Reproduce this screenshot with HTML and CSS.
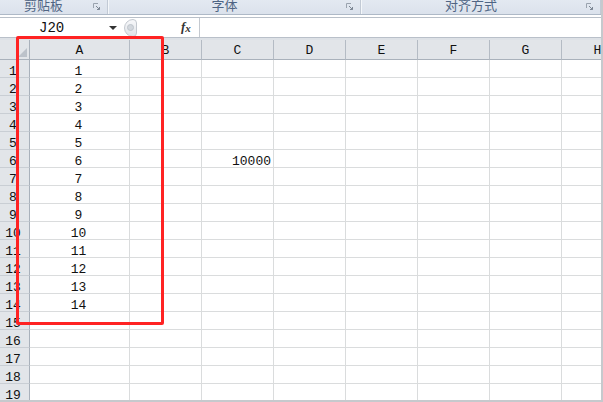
FILE: index.html
```html
<!DOCTYPE html>
<html lang="zh">
<head>
    <meta charset="UTF-8">
    <title>Excel</title>
    <link rel="stylesheet" href="styles.css">
</head>
<body>
    <div class="window">
        <div class="ribbon">
            <div class="group group-clip">
                <span class="group-label">剪贴板</span>
                <span class="launcher"><svg width="7" height="7" viewBox="0 0 7 7"><path d="M0.5 5V0.5H5" fill="none" stroke="#9aa3ae"/><path d="M3 3L6.5 6.5M4 6.5H6.5V4" fill="none" stroke="#7d8794"/></svg></span>
            </div>
            <div class="group group-font">
                <span class="group-label">字体</span>
                <span class="launcher"><svg width="7" height="7" viewBox="0 0 7 7"><path d="M0.5 5V0.5H5" fill="none" stroke="#9aa3ae"/><path d="M3 3L6.5 6.5M4 6.5H6.5V4" fill="none" stroke="#7d8794"/></svg></span>
            </div>
            <div class="group group-align">
                <span class="group-label">对齐方式</span>
                <span class="launcher"><svg width="7" height="7" viewBox="0 0 7 7"><path d="M0.5 5V0.5H5" fill="none" stroke="#9aa3ae"/><path d="M3 3L6.5 6.5M4 6.5H6.5V4" fill="none" stroke="#7d8794"/></svg></span>
            </div>
        </div>

        <div class="formula-bar">
            <div class="name-box">
                <span>J20</span>
                <span class="arrow"></span>
            </div>
            <div class="grip"><span></span></div>
            <div class="fx">f<sub>x</sub></div>
            <div class="formula-input"></div>
        </div>

        <div class="sheet" id="sheet"></div>

        <div class="highlight"></div>
    </div>

    <script>
        const columns = ['A', 'B', 'C', 'D', 'E', 'F', 'G', 'H'];
        const values = {
            'C6': '10000'
        };
        for (let i = 1; i <= 14; i++) values['A' + i] = String(i);

        let html = '<div class="corner"><span></span></div>';
        html += columns.map(c => `<div class="col-head">${c}</div>`).join('');

        for (let r = 1; r <= 19; r++) {
            html += `<div class="row-head">${r}</div>`;
            html += columns.map(c => {
                const v = values[c + r] || '';
                const cls = c === 'A' ? 'cell center' : 'cell';
                return `<div class="${cls}">${v}</div>`;
            }).join('');
        }

        document.getElementById('sheet').innerHTML = html;
    </script>
</body>
</html>
```

FILE: styles.css
```css
* {
    margin: 0;
    padding: 0;
    box-sizing: border-box;
}

body {
    background: #fff;
    font-family: 'Liberation Mono', monospace;
    overflow: hidden;
}

.window {
    position: relative;
    width: 603px;
    height: 402px;
    border-right: 2px solid #c6c9cd;
    border-bottom: 2px solid #c6c9cd;
    overflow: hidden;
}

/* ribbon group names */
.ribbon {
    display: flex;
    height: 15px;
    background: linear-gradient(#e3e9f1, #dbe2ec);
    border-bottom: 1px solid #aeb9c7;
    overflow: hidden;
}

.group {
    display: flex;
    border-right: 1px solid #c2cad5;
}

.group + .group {
    border-left: 1px solid #f4f7fa;
}

.group-clip { width: 108px; }
.group-font { width: 253px; }
.group-align { flex: 1; }

.group-label {
    flex: 1;
    text-align: center;
    font-family: 'Noto Sans CJK SC', sans-serif;
    font-size: 13px;
    line-height: 13px;
    margin-top: -2px;
    color: #4f6584;
}

.launcher {
    width: 20px;
    padding: 3px 0 0 6px;
}

.launcher svg {
    display: block;
}

/* formula bar */
.formula-bar {
    display: flex;
    align-items: center;
    height: 21px;
    margin-top: 2px;
    background: #fff;
    border-top: 1px solid #b9c0c9;
    border-bottom: 1px solid #b9c0c9;
}

.name-box {
    display: flex;
    align-items: center;
    width: 122px;
    height: 100%;
    padding-left: 39px;
    font-size: 14px;
    color: #111;
}

.arrow {
    margin-left: auto;
    margin-right: 5px;
    border-left: 4px solid transparent;
    border-right: 4px solid transparent;
    border-top: 4px solid #333;
}

.grip {
    display: flex;
    align-items: center;
    justify-content: center;
    width: 13px;
    height: 18px;
    margin-left: 2px;
    border: 1px solid #c3c8cf;
    border-radius: 9px 4px 4px 9px;
    background: linear-gradient(#f7f8fa, #dfe3e8);
}

.grip span {
    width: 7px;
    height: 7px;
    border-radius: 50%;
    background: #d2d7dd;
    border: 1px solid #bfc5cc;
}

.fx {
    width: 19px;
    height: 100%;
    margin-left: 44px;
    padding-top: 1px;
    border-right: 1px solid #c4c9d0;
    font-family: 'Liberation Serif', serif;
    font-style: italic;
    font-weight: bold;
    font-size: 13px;
    color: #333;
}

.fx sub {
    font-size: 11px;
    vertical-align: -1px;
}

.formula-input {
    flex: 1;
    height: 100%;
}

/* worksheet */
.sheet {
    display: grid;
    grid-template-columns: 30px 100px repeat(7, 72px);
    grid-template-rows: 20px;
    grid-auto-rows: 18px;
    border-top: 2px solid #dde1e6;
    width: 634px;
    font-size: 13px;
    color: #111;
}

.corner, .col-head, .row-head {
    background: #e2e5e9;
    line-height: 18px;
    padding-top: 2px;
    overflow: hidden;
}

.row-head {
    padding-top: 3px;
}

.corner {
    position: relative;
    border-right: 1px solid #a9b1bb;
    border-bottom: 1px solid #a9b1bb;
}

.corner span {
    position: absolute;
    right: 2px;
    bottom: 2px;
    border-left: 9px solid transparent;
    border-bottom: 9px solid #bcc2ca;
}

.col-head {
    text-align: center;
    border-right: 1px solid #b4bbc4;
    border-bottom: 1px solid #a9b1bb;
}

.row-head {
    text-align: center;
    padding-right: 3px;
    border-right: 1px solid #a9b1bb;
    border-bottom: 1px solid #c9ced4;
}

.cell {
    text-align: right;
    padding-right: 2px;
    line-height: 18px;
    padding-top: 3px;
    overflow: hidden;
    border-right: 1px solid #dadcdd;
    border-bottom: 1px solid #dadcdd;
}

.center {
    text-align: center;
}

/* red box drawn over column A */
.highlight {
    position: absolute;
    left: 16px;
    top: 36px;
    width: 148px;
    height: 289px;
    border: 3px solid #ff2323;
    border-radius: 2px;
}
```
